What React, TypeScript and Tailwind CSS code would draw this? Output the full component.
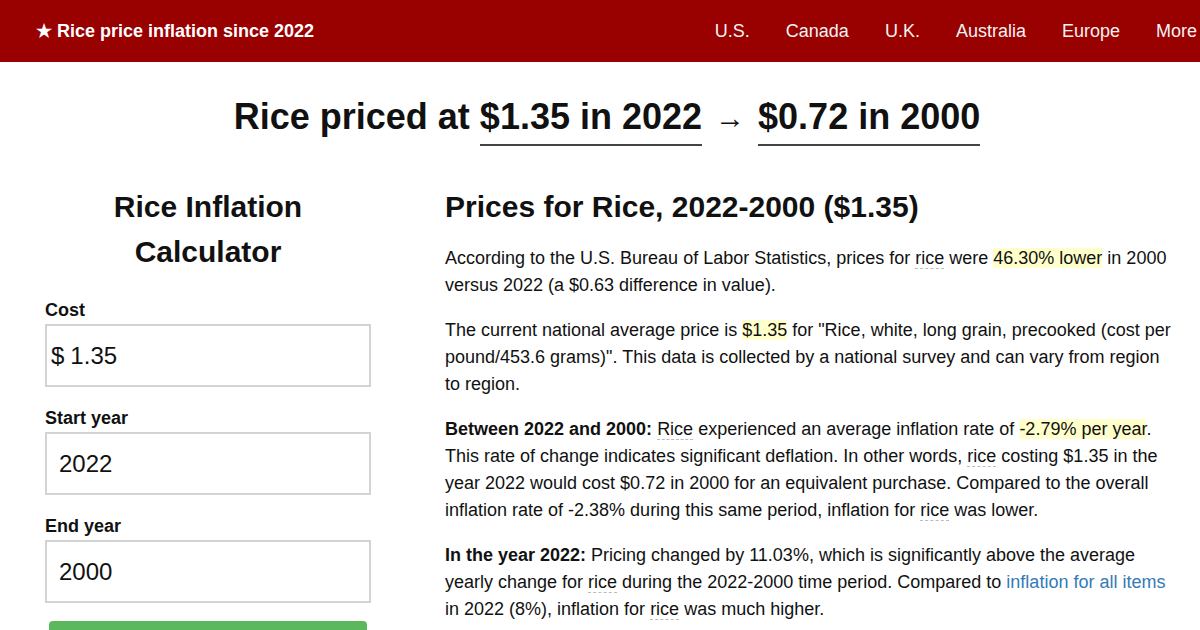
import React from "react";

const navItems = ["U.S.", "Canada", "U.K.", "Australia", "Europe", "More"];

function Term({ children }: { children: React.ReactNode }) {
  // dotted underline used for the glossary term "rice"
  return <span className="border-b border-dashed border-[#bbbbbb]">{children}</span>;
}

function Mark({ children }: { children: React.ReactNode }) {
  return <span className="bg-[#ffffcc]">{children}</span>;
}

function Field({ label, prefix, value }: { label: string; prefix?: string; value: string }) {
  return (
    <div className="mb-[19px]">
      <div className="text-[18px] leading-[24px] font-bold mb-[2px]">{label}</div>
      <div className="h-[63px] border-2 border-[#d3d3d3] flex items-center text-[24px] pl-[4px]">
        {prefix ? (
          <span className="flex items-center">
            <span>{prefix}</span>
            <span className="ml-[6px]">{value}</span>
          </span>
        ) : (
          <span className="pl-[8px]">{value}</span>
        )}
      </div>
    </div>
  );
}

export default function App() {
  return (
    <div className="w-[1200px] h-[630px] overflow-hidden bg-white text-[#111] font-['Liberation_Sans',Arial,sans-serif]">
      <header className="h-[62px] bg-[#990000] flex items-center text-white overflow-hidden">
        <div className="pl-[36px] text-[18px] font-bold whitespace-nowrap">★ Rice price inflation since 2022</div>
        <nav className="ml-auto flex items-center gap-[36px] text-[18px] text-[#f3f3f3] whitespace-nowrap pr-[3px]">
          {navItems.map((n) => (
            <span key={n}>{n}</span>
          ))}
        </nav>
      </header>

      <h1 className="mt-[35px] pl-[14px] text-center text-[36px] leading-[40px] font-bold whitespace-nowrap">
        Rice priced at{" "}
        <span className="inline-block border-b-2 border-[#444] pb-[7px]">$1.35 in 2022</span>{" "}
        <span className="text-[30px] font-normal align-[1px] px-[3px]">→</span>{" "}
        <span className="inline-block border-b-2 border-[#444] pb-[7px]">$0.72 in 2000</span>
      </h1>

      <div className="mt-[38px] flex pl-[45px]">
        <aside className="w-[326px] shrink-0">
          <h2 className="text-center text-[30px] leading-[45px] font-bold mb-[24px]">
            Rice Inflation
            <br />
            Calculator
          </h2>
          <Field label="Cost" prefix="$" value="1.35" />
          <Field label="Start year" value="2022" />
          <Field label="End year" value="2000" />
          <div className="mx-[4px] -mt-px h-[40px] bg-[#5cb85c] rounded-[4px]" />
        </aside>

        <main className="ml-[74px] w-[728px] text-[18px] leading-[27px]">
          <h2 className="text-[30px] leading-[45px] font-bold mb-[16px]">Prices for Rice, 2022-2000 ($1.35)</h2>
          <p className="mb-[18px]">
            According to the U.S. Bureau of Labor Statistics, prices for <Term>rice</Term> were{" "}
            <Mark>46.30% lower</Mark> in 2000 versus 2022 (a $0.63 difference in value).
          </p>
          <p className="mb-[18px]">
            The current national average price is <Mark>$1.35</Mark> for "Rice, white, long grain, precooked (cost per
            pound/453.6 grams)". This data is collected by a national survey and can vary from region to region.
          </p>
          <p className="mb-[18px]">
            <b>Between 2022 and 2000:</b> <Term>Rice</Term> experienced an average inflation rate of{" "}
            <Mark>-2.79% per year</Mark>. This rate of change indicates significant deflation. In other words,{" "}
            <Term>rice</Term> costing $1.35 in the year 2022 would cost $0.72 in 2000 for an equivalent purchase.
            Compared to the overall inflation rate of -2.38% during this same period, inflation for <Term>rice</Term>{" "}
            was lower.
          </p>
          <p className="mb-[18px]">
            <b>In the year 2022:</b> Pricing changed by 11.03%, which is significantly above the average yearly change
            for <Term>rice</Term> during the 2022-2000 time period. Compared to{" "}
            <a className="text-[#337ab7]">inflation for all items</a> in 2022 (8%), inflation for <Term>rice</Term> was
            much higher.
          </p>
        </main>
      </div>
    </div>
  );
}
